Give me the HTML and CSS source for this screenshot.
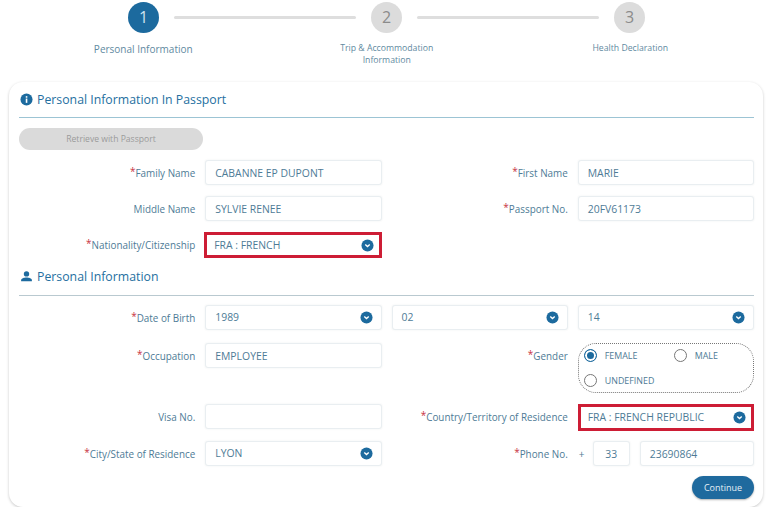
FILE: index.html
```html
<!DOCTYPE html>
<html lang="en">
<head>
  <meta charset="UTF-8">
  <meta name="viewport" content="width=device-width, initial-scale=1.0">
  <title>Personal Information</title>
  <link rel="stylesheet" href="styles.css">
</head>
<body>

<svg class="defs" width="0" height="0">
  <symbol id="chev" viewBox="0 0 14 14">
    <circle cx="7" cy="7" r="6.5" fill="#1c6a9e"/>
    <path d="M4.6 5.9 7 8.2l2.4-2.3" fill="none" stroke="#fff" stroke-width="1.5"/>
  </symbol>
</svg>

<div class="steps">
  <div class="step-track">
    <div class="circle active">1</div>
    <div class="track-line"></div>
    <div class="circle">2</div>
    <div class="track-line"></div>
    <div class="circle">3</div>
  </div>
  <div class="step-labels">
    <div class="step-label first">Personal Information</div>
    <div class="step-label">Trip &amp; Accommodation<br>Information</div>
    <div class="step-label">Health Declaration</div>
  </div>
</div>

<div class="card">
  <div class="section-head">
    <svg class="head-icon" viewBox="0 0 14 14"><circle cx="7" cy="7" r="6.5" fill="#1c6a9e"/><rect x="6.2" y="6" width="1.7" height="4.6" fill="#fff"/><rect x="6.2" y="3.4" width="1.7" height="1.7" fill="#fff"/></svg>
    Personal Information In Passport
  </div>
  <button class="retrieve">Retrieve with Passport</button>

  <div class="form-grid passport">
    <div class="label"><span class="req">*</span>Family Name</div>
    <div class="field">CABANNE EP DUPONT</div>
    <div class="label"><span class="req">*</span>First Name</div>
    <div class="field">MARIE</div>

    <div class="label">Middle Name</div>
    <div class="field">SYLVIE RENEE</div>
    <div class="label"><span class="req">*</span>Passport No.</div>
    <div class="field">20FV61173</div>

    <div class="label"><span class="req">*</span>Nationality/Citizenship</div>
    <div class="field select marked wide">FRA : FRENCH<svg class="chev"><use href="#chev"/></svg></div>
  </div>

  <div class="section-head second">
    <svg class="head-icon" viewBox="0 0 14 14"><circle cx="7" cy="4.2" r="2.9" fill="#1c6a9e"/><path d="M1.2 12.2v-1.3C1.2 8.9 4.6 8 7 8s5.800.9 5.800 2.900v1.300z" fill="#1c6a9e"/></svg>
    Personal Information
  </div>

  <div class="form-grid personal">
    <div class="label"><span class="req">*</span>Date of Birth</div>
    <div class="field select">1989<svg class="chev"><use href="#chev"/></svg></div>
    <div class="field select">02<svg class="chev"><use href="#chev"/></svg></div>
    <div class="field select">14<svg class="chev"><use href="#chev"/></svg></div>

    <div class="label"><span class="req">*</span>Occupation</div>
    <div class="field">EMPLOYEE</div>
    <div class="label"><span class="req">*</span>Gender</div>
    <div class="radio-box">
      <div class="radio-item"><span class="radio on"></span>FEMALE</div>
      <div class="radio-item"><span class="radio"></span>MALE</div>
      <div class="radio-item"><span class="radio"></span>UNDEFINED</div>
    </div>

    <div class="label">Visa No.</div>
    <div class="field"></div>
    <div class="label"><span class="req">*</span>Country/Territory of Residence</div>
    <div class="field select marked tall">FRA : FRENCH REPUBLIC<svg class="chev"><use href="#chev"/></svg></div>

    <div class="label"><span class="req">*</span>City/State of Residence</div>
    <div class="field select">LYON<svg class="chev"><use href="#chev"/></svg></div>
    <div class="label"><span class="req">*</span>Phone No.</div>
    <div class="phone">
      <span class="plus">+</span>
      <div class="field code">33</div>
      <div class="field number">23690864</div>
    </div>
  </div>

  <div class="actions">
    <button class="continue">Continue</button>
  </div>
</div>

</body>
</html>
```

FILE: styles.css
```css
body {
  font-family: 'Open Sans', sans-serif;
  background-color: #fff;
  margin: 0;
  color: #4e7b96;
  overflow: hidden;
}

.defs {
  display: block;
  height: 0;
}

/* stepper */
.steps {
  height: 82px;
  padding-top: 2px;
  box-sizing: border-box;
}

.step-track {
  display: flex;
  align-items: center;
  padding-left: 128px;
}

.circle {
  width: 31px;
  height: 31px;
  border-radius: 50%;
  background-color: #dcdcdc;
  color: #8b8b8b;
  font-size: 16px;
  line-height: 31px;
  text-align: center;
  flex: none;
}

.circle.active {
  background-color: #1c6a9e;
  color: #cfe3ef;
}

.track-line {
  width: 182px;
  height: 3px;
  margin: 0 15px;
  background-color: #dedede;
  border-radius: 2px;
  flex: none;
}

.step-labels {
  display: grid;
  grid-template-columns: repeat(3, 243.5px);
  margin: 9px 0 0 21.5px;
}

.step-label {
  font-size: 8.7px;
  line-height: 12px;
  text-align: center;
  color: #5f8aa1;
}

.step-label.first {
  font-size: 10px;
  line-height: 14px;
}

/* card */
.card {
  margin: 0 5px 0 9px;
  height: 425px;
  box-sizing: border-box;
  padding: 8px 9px 0 10px;
  border-radius: 14px;
  background-color: #fff;
  box-shadow: 0 1px 3px rgba(0, 0, 0, 0.22);
}

.section-head {
  display: flex;
  align-items: center;
  gap: 4px;
  height: 28px;
  box-sizing: border-box;
  padding-bottom: 9px;
  border-bottom: 1px solid #9cc4d4;
  font-size: 12.3px;
  font-weight: 500;
  color: #256f9f;
}

.section-head.second {
  height: 38px;
  padding: 0;
  border-bottom-color: #b9c9d0;
}

.head-icon {
  width: 13px;
  height: 13px;
  margin-left: 1px;
  flex: none;
}

.retrieve {
  display: block;
  width: 184px;
  height: 22px;
  margin-top: 10px;
  padding: 0;
  border: none;
  border-radius: 11px;
  background-color: #dadada;
  color: #9a9a9a;
  font-family: inherit;
  font-size: 8.6px;
}

/* form */
.form-grid {
  display: grid;
  grid-template-columns: 176.25px 176.25px 176.25px 176.25px;
  column-gap: 10px;
  align-items: start;
}

.form-grid.passport {
  margin-top: 10px;
  grid-template-rows: 25px 25px 26px;
  row-gap: 11px;
}

.form-grid.personal {
  margin-top: 9px;
  grid-template-rows: 27px 50px 26px 25px;
  row-gap: 11px;
}

.label {
  font-size: 9.9px;
  line-height: 26px;
  text-align: right;
  white-space: nowrap;
}

.req {
  color: #c8323f;
  font-size: 10px;
  line-height: 10px;
  position: relative;
  top: -2px;
}

.field {
  height: 25px;
  box-sizing: border-box;
  padding: 0 9px;
  border: 1px solid #e9eef1;
  border-radius: 3px;
  background-color: #fff;
  box-shadow: 0 0 2px rgba(60, 90, 110, 0.1);
  font-size: 10.4px;
  line-height: 25px;
  white-space: nowrap;
}

.field.select {
  display: flex;
  align-items: center;
  justify-content: space-between;
  padding-right: 8px;
}

.chev {
  width: 13px;
  height: 13px;
  flex: none;
}

.field.marked {
  height: 26px;
  padding-left: 7px;
  padding-right: 5px;
  border: 3px solid #cd1d35;
  border-radius: 0;
  box-shadow: none;
}

.field.marked.wide {
  margin-left: -1px;
}

.field.marked.tall {
  height: 27px;
}

.radio-box {
  display: grid;
  grid-template-columns: 90px 1fr;
  grid-auto-rows: 25px;
  align-items: center;
  align-content: center;
  height: 50px;
  box-sizing: border-box;
  padding-left: 5px;
  border: 1px dotted #777;
  border-radius: 18px;
}

.radio-item {
  display: flex;
  align-items: center;
  gap: 8px;
  font-size: 8.9px;
}

.radio {
  width: 13px;
  height: 13px;
  box-sizing: border-box;
  border: 1px solid #777;
  border-radius: 50%;
  background-color: #fff;
  flex: none;
}

.radio.on {
  border-color: #1c6a9e;
  background-color: #1c6a9e;
  box-shadow: inset 0 0 0 2px #fff;
}

.phone {
  display: flex;
  align-items: center;
  height: 25px;
}

.plus {
  width: 15px;
  font-size: 10px;
  padding-left: 1px;
  box-sizing: border-box;
}

.field.code {
  width: 37px;
  margin-right: 10px;
  text-align: center;
  padding: 0;
  flex: none;
}

.field.number {
  flex: 1;
}

.actions {
  display: flex;
  justify-content: flex-end;
  margin-top: 10px;
}

.continue {
  width: 62px;
  height: 23px;
  padding: 0;
  border: none;
  border-radius: 12px;
  background-color: #1f6a9e;
  box-shadow: 0 1px 2px rgba(0, 0, 0, 0.3);
  color: #e4eff6;
  font-family: inherit;
  font-size: 9px;
}
```
